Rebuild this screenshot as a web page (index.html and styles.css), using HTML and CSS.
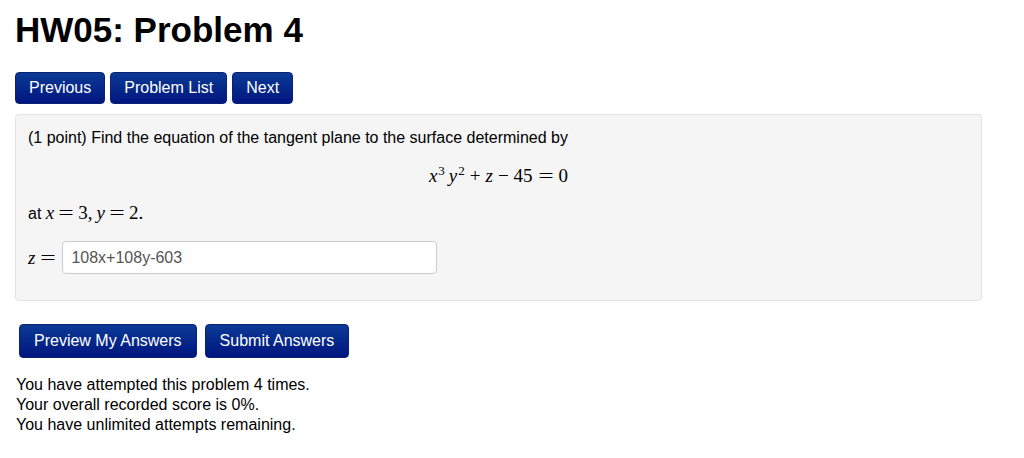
FILE: index.html
```html
<!DOCTYPE html>
<html lang="en">
<head>
<meta charset="utf-8">
<title>HW05: Problem 4</title>
<link rel="stylesheet" href="styles.css">
</head>
<body>
<div class="page">
  <h1 class="title">HW05: Problem 4</h1>
  <div class="nav">
    <button class="btn">Previous</button>
    <button class="btn">Problem List</button>
    <button class="btn">Next</button>
  </div>
  <div class="problem">
    <p class="intro">(1 point) Find the equation of the tangent plane to the surface determined by</p>
    <div class="display"><span class="math"><i>x</i><sup>3</sup><i class="sp">y</i><sup>2</sup><span class="op">+</span><i>z</i><span class="op">&minus;</span>45<span class="rel">=</span>0</span></div>
    <p class="at">at <span class="math"><i>x</i><span class="rel">=</span>3,<i class="sp">y</i><span class="rel">=</span>2.</span></p>
    <div class="answer">
      <span class="math label"><i>z</i><span class="rel">=</span></span>
      <input class="field" type="text" value="108x+108y-603">
    </div>
  </div>
  <div class="actions">
    <button class="btn btn-lg">Preview My Answers</button>
    <button class="btn btn-lg">Submit Answers</button>
  </div>
  <div class="status">
    <div>You have attempted this problem 4 times.</div>
    <div>Your overall recorded score is 0%.</div>
    <div>You have unlimited attempts remaining.</div>
  </div>
</div>
</body>
</html>
```

FILE: styles.css
```css
* { box-sizing: border-box; }
body {
  margin: 0;
  background: #fff;
  color: #000;
  font-family: "Liberation Sans", Arial, sans-serif;
  font-size: 16px;
}
.page {
  padding: 0 42px 0 15px;
}
.title {
  font-size: 35px;
  line-height: 40px;
  font-weight: bold;
  margin: 10px 0 0 0;
}
.nav {
  display: flex;
  gap: 5px;
  margin-top: 22px;
}
.btn {
  font-family: "Liberation Sans", Arial, sans-serif;
  font-size: 16px;
  color: #fff;
  height: 32px;
  padding: 0 13px;
  border: 1px solid #0a2270;
  border-radius: 4px;
  background: linear-gradient(#0b3a95, #00167f);
  cursor: pointer;
}
.problem {
  margin-top: 10px;
  background: #f5f5f5;
  border: 1px solid #e3e3e3;
  border-radius: 4px;
  padding: 13px 12px 26px;
}
.intro, .at {
  margin: 0;
  line-height: 20px;
}
.math {
  font-family: "Liberation Serif", "Times New Roman", serif;
  font-size: 19px;
  line-height: 1;
}
.math sup {
  font-size: 13px;
  line-height: 0;
  margin-left: 1px;
}
.math .sp {
  margin-left: 4px;
}
.math .op {
  margin: 0 5px;
}
.math .rel {
  display: inline-block;
  width: 16px;
  margin: 0 5px;
  text-align: center;
  transform: scaleX(1.45);
}
.at .math .rel {
  margin: 0 4px;
}
.label .rel {
  margin-right: 0;
}
.display {
  text-align: center;
  line-height: 24px;
  margin-top: 17px;
}
.at {
  margin-top: 14px;
}
.answer {
  display: flex;
  align-items: center;
  gap: 6px;
  margin-top: 17px;
}
.label {
  white-space: nowrap;
}
.field {
  width: 375px;
  height: 33px;
  border: 1px solid #ccc;
  border-radius: 4px;
  background: #fff;
  padding: 0 8px;
  font-family: "Liberation Sans", Arial, sans-serif;
  font-size: 16px;
  color: #555;
}
.actions {
  display: flex;
  gap: 8px;
  margin: 23px 0 0 4px;
}
.btn-lg {
  height: 34px;
  padding: 0 14px;
}
.status {
  margin-top: 17px;
  line-height: 20px;
  padding-left: 1px;
}
```
